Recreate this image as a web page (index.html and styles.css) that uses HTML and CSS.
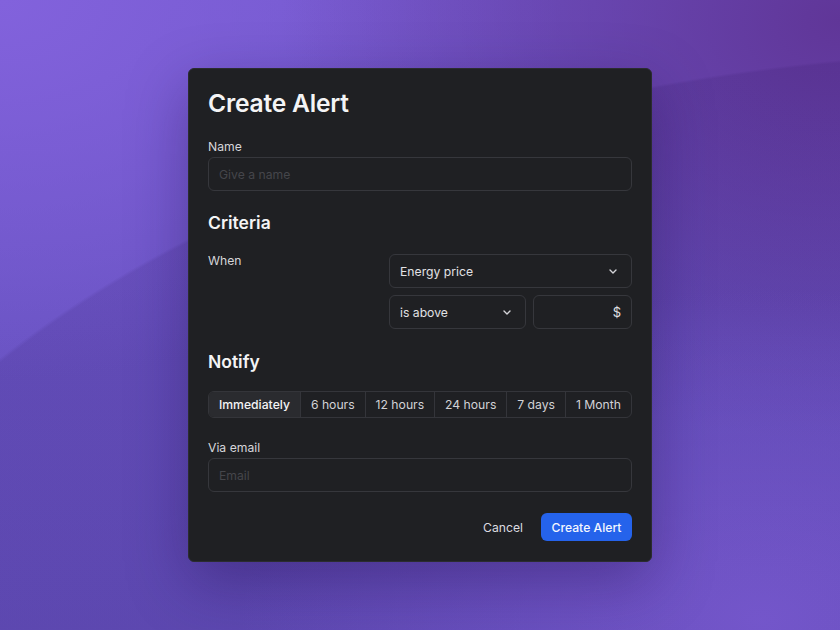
FILE: index.html
```html
<!DOCTYPE html>
<html lang="en">
<head>
<meta charset="utf-8">
<title>Create Alert</title>
<link rel="stylesheet" href="styles.css">
</head>
<body>
<div class="modal">
  <h1 class="title">Create Alert</h1>

  <div class="field">
    <label class="label">Name</label>
    <div class="input"><span class="placeholder">Give a name</span></div>
  </div>

  <h2 class="section">Criteria</h2>
  <div class="criteria">
    <div class="label when">When</div>
    <div class="crit-controls">
      <div class="input select wide"><span>Energy price</span><svg class="chev" viewBox="0 0 8 5" width="8" height="5"><path d="M1 1l3 3 3-3" fill="none" stroke="currentColor" stroke-width="1.4" stroke-linecap="round" stroke-linejoin="round"/></svg></div>
      <div class="crit-row">
        <div class="input select"><span>is above</span><svg class="chev" viewBox="0 0 8 5" width="8" height="5"><path d="M1 1l3 3 3-3" fill="none" stroke="currentColor" stroke-width="1.4" stroke-linecap="round" stroke-linejoin="round"/></svg></div>
        <div class="input amount"><span>$</span></div>
      </div>
    </div>
  </div>

  <h2 class="section notify">Notify</h2>
  <div class="segmented">
    <div class="seg active">Immediately</div>
    <div class="seg">6 hours</div>
    <div class="seg">12 hours</div>
    <div class="seg">24 hours</div>
    <div class="seg">7 days</div>
    <div class="seg">1 Month</div>
  </div>

  <div class="field email-field">
    <label class="label">Via email</label>
    <div class="input"><span class="placeholder">Email</span></div>
  </div>

  <div class="actions">
    <button class="btn ghost">Cancel</button>
    <button class="btn primary">Create Alert</button>
  </div>
</div>
</body>
</html>
```

FILE: styles.css
```css
* { box-sizing: border-box; }

html, body {
  margin: 0;
  height: 100%;
}

body {
  font-family: Inter, "Noto Sans", sans-serif;
  min-height: 100vh;
  display: flex;
  align-items: center;
  justify-content: center;
  overflow: hidden;
  background:
    radial-gradient(ellipse 1300px 750px at 1050px 800px, rgba(25, 5, 70, 0.11) 99.6%, rgba(25, 5, 70, 0) 100%),
    radial-gradient(ellipse 520px 330px at 760px 620px, rgba(128, 97, 220, 0.95), rgba(128, 97, 220, 0)),
    radial-gradient(ellipse 560px 420px at 840px 20px, rgba(96, 54, 152, 1), rgba(96, 54, 152, 0)),
    radial-gradient(ellipse 560px 380px at 0 0, rgba(130, 98, 220, 1), rgba(130, 98, 220, 0)),
    linear-gradient(to bottom, #7258cc 0%, #6a54c4 50%, #6550bd 100%);
}

.modal {
  width: 464px;
  background: #1f2023;
  border: 1px solid #2b2c30;
  border-radius: 6px;
  padding: 20px 19px 20px;
  box-shadow: 0 20px 60px rgba(30, 10, 70, 0.35);
  display: flex;
  flex-direction: column;
}

.title {
  margin: 0;
  font-size: 24.6px;
  line-height: 29px;
  font-weight: 600;
  color: #f4f4f5;
  letter-spacing: -0.2px;
}

.label {
  display: block;
  font-size: 12.2px;
  line-height: 16px;
  color: #d6d6da;
}

.field {
  margin-top: 21px;
  display: flex;
  flex-direction: column;
  gap: 2px;
}

.input {
  height: 34px;
  border: 1px solid #36373c;
  border-radius: 6px;
  padding: 0 10px;
  display: flex;
  align-items: center;
  font-size: 12.2px;
  color: #e2e2e5;
}

.placeholder {
  color: #45464b;
}

.section {
  margin: 21px 0 0;
  font-size: 17.5px;
  line-height: 22px;
  font-weight: 600;
  color: #f4f4f5;
}

.section.notify {
  margin-top: 22px;
}

.criteria {
  margin-top: 19px;
  display: grid;
  grid-template-columns: 181px 1fr;
}

.when {
  margin-top: 0;
}

.crit-controls {
  display: flex;
  flex-direction: column;
  gap: 7px;
  margin-top: 1px;
}

.select {
  justify-content: space-between;
  padding-right: 14px;
}

.chev {
  color: #d4d4d8;
  display: block;
}

.crit-row {
  display: grid;
  grid-template-columns: 137px 1fr;
  gap: 7px;
}

.amount {
  justify-content: flex-end;
  padding-right: 10px;
  font-size: 13px;
}

.segmented {
  margin-top: 18px;
  height: 27px;
  display: flex;
  border: 1px solid #34353a;
  border-radius: 6px;
  overflow: hidden;
}

.seg {
  flex: 1 1 auto;
  display: flex;
  align-items: center;
  justify-content: center;
  padding: 0 9px;
  font-size: 12.2px;
  color: #d2d2d6;
  border-left: 1px solid #34353a;
  white-space: nowrap;
}

.seg:first-child {
  border-left: none;
}

.seg.active {
  background: #2a2b2f;
  color: #f4f4f5;
  font-weight: 500;
}

.email-field {
  margin-top: 22px;
}

.actions {
  margin-top: 21px;
  display: flex;
  justify-content: flex-end;
  align-items: center;
  gap: 6px;
}

.btn {
  font-family: inherit;
  font-size: 12.2px;
  height: 28px;
  border-radius: 6px;
  border: none;
  padding: 0 12px;
  cursor: pointer;
  white-space: nowrap;
}

.ghost {
  background: transparent;
  color: #dcdce0;
}

.primary {
  background: #2563eb;
  color: #f4f7ff;
  padding: 0 10px;
  width: 91px;
  font-weight: 500;
}
```
